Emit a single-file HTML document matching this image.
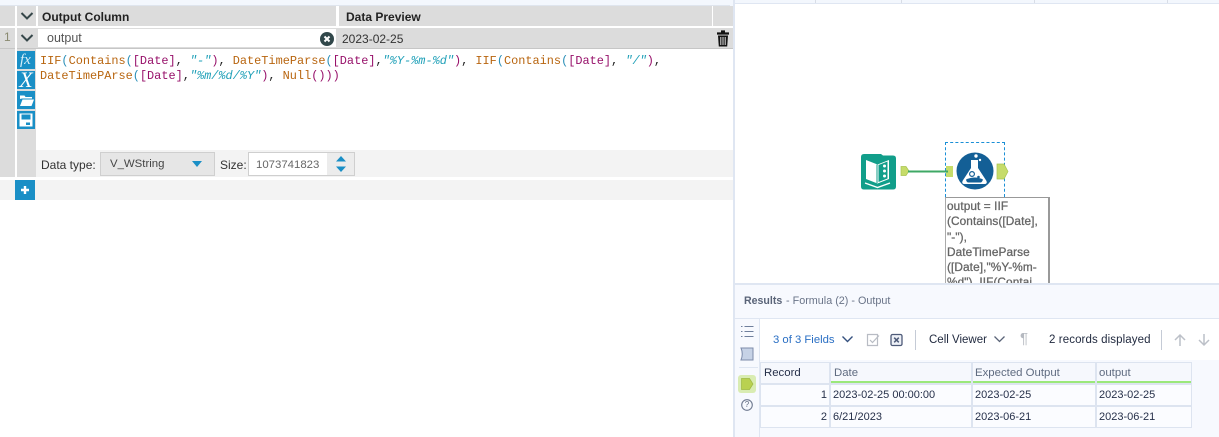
<!DOCTYPE html>
<html><head><meta charset="utf-8">
<style>
html,body{margin:0;padding:0;background:#fff}
body{width:1219px;height:437px;position:relative;overflow:hidden;font-family:"Liberation Sans",sans-serif;font-size:12px;color:#333}
.a{position:absolute}
.t{position:absolute;white-space:nowrap;line-height:16px}
.code{position:absolute;font-family:"Liberation Mono",monospace;font-size:11.9px;line-height:15px;white-space:pre;color:#222}
.f{color:#b8650f}.p{color:#2a8fb8}.c{color:#97106a}.s{color:#1fa0b8;font-style:italic}
.cell{position:absolute;background:#fbfcff;box-sizing:border-box;border:1px solid #dde4f0}
.cell span{position:absolute;top:2px;white-space:nowrap;line-height:16px;color:#26304a;font-size:11px}
.cell.h span{font-size:11.4px}
.btn{position:absolute;left:17px;width:18px;height:18px;background:#1a8fc6}
</style></head><body>

<!-- left pane -->
<div class="a" style="left:0;top:0;width:733px;height:5px;background:#f3f7fd"></div>
<div class="a" style="left:0;top:5px;width:733px;height:1px;background:#dfe5ee"></div>
<div class="a" style="left:0;top:6px;width:733px;height:20px;background:#dcdcdc"></div>
<div class="a" style="left:36px;top:6px;width:2px;height:20px;background:#fff"></div>
<div class="a" style="left:336px;top:6px;width:3px;height:20px;background:#fff"></div>
<div class="a" style="left:712px;top:6px;width:1px;height:42px;background:#fff"></div>
<svg class="a" style="left:20px;top:11px" width="14" height="10"><path d="M1.500 2 7 7.500 12.500 2" fill="none" stroke="#36474a" stroke-width="2"/></svg>
<div class="t" style="left:42px;top:9px;font-weight:bold;color:#222;font-size:12px">Output Column</div>
<div class="t" style="left:346px;top:9px;font-weight:bold;color:#222;font-size:12px">Data Preview</div>

<div class="a" style="left:0;top:28px;width:733px;height:20px;background:#dcdcdc"></div>
<div class="a" style="left:0;top:48px;width:733px;height:1px;background:#c6c6c6"></div>
<div class="t" style="left:4px;top:29px;color:#8a8a70">1</div>
<svg class="a" style="left:20px;top:33px" width="14" height="10"><path d="M1.500 2 7 7.500 12.500 2" fill="none" stroke="#36474a" stroke-width="2"/></svg>
<div class="a" style="left:38px;top:29px;width:298px;height:18px;background:#fff"></div>
<div class="t" style="left:47px;top:30px;color:#555;font-size:12.500px">output</div>
<svg class="a" style="left:320px;top:32px" width="14" height="14"><circle cx="7" cy="7" r="7" fill="#31474a"/><path d="M4.500 4.500 9.500 9.500M9.500 4.500 4.500 9.500" stroke="#fff" stroke-width="2"/></svg>
<div class="t" style="left:342px;top:31px;color:#333">2023-02-25</div>
<svg class="a" style="left:716px;top:30px" width="14" height="17" viewBox="0 0 14 17"><path d="M5 1.500h4M1 3.500h12" stroke="#111" stroke-width="2.200"/><path d="M2 5.500h10l-.8 11H2.800z" fill="#111"/><path d="M4.800 7v8M7 7v8M9.200 7v8" stroke="#ddd" stroke-width="1"/></svg>

<div class="a" style="left:0;top:49px;width:15px;height:128px;background:#dcdcdc"></div>
<div class="a" style="left:17px;top:49px;width:19px;height:128px;background:#dcdcdc"></div>
<div class="a" style="left:15px;top:6px;width:2px;height:171px;background:#fff"></div>

<div class="btn" style="top:51px"></div>
<div class="t" style="left:20px;top:52px;color:#d8eef8;font-family:'Liberation Serif',serif;font-style:italic;font-size:15px">fx</div>
<div class="btn" style="top:71px"></div>
<div class="t" style="left:17px;top:70px;width:18px;text-align:center;color:#fff;font-family:'Liberation Serif',serif;font-style:italic;font-size:22px;line-height:20px">X</div>
<div class="btn" style="top:91px"></div>
<svg class="a" style="left:17px;top:91px" width="18" height="18"><path d="M3 8V4.500h4.500l1 1.500h6.500v1.500H5z" fill="#fff"/><path d="M5.500 8.500H17L14.500 15H3z" fill="#fff"/></svg>
<div class="btn" style="top:111px"></div>
<svg class="a" style="left:17px;top:111px" width="18" height="18"><path d="M2.500 2.500h13v13h-13z" fill="#fff"/><path d="M4.500 3.500h9v5h-9z" fill="#1a8fc6"/><path d="M9 11.500h4v2.500H9z" fill="#1a8fc6"/></svg>

<div class="code" style="left:40px;top:54px"><span class="f">IIF</span><span class="p">(</span><span class="f">Contains</span><span class="p">(</span><span class="c">[Date]</span>, <span class="s">"-"</span><span class="c">)</span>, <span class="f">DateTimeParse</span><span class="p">(</span><span class="c">[Date]</span>,<span class="s">"%Y-%m-%d"</span><span class="c">)</span>, <span class="f">IIF</span><span class="p">(</span><span class="f">Contains</span><span class="p">(</span><span class="c">[Date]</span>, <span class="s">"/"</span><span class="c">)</span>,
<span class="f">DateTimePArse</span><span class="p">(</span><span class="c">[Date]</span>,<span class="s">"%m/%d/%Y"</span><span class="c">)</span>, <span class="f">Null</span><span class="c">()))</span></div>

<div class="a" style="left:36px;top:150px;width:697px;height:27px;background:#f3f3f3"></div>
<div class="t" style="left:41px;top:157px;color:#333;font-size:12px">Data type:</div>
<div class="a" style="left:100px;top:152px;width:115px;height:24px;box-sizing:border-box;background:#e6e6e6;border:1px solid #cfcfcf"></div>
<div class="t" style="left:110px;top:156px;color:#444;font-size:11.400px">V_WString</div>
<svg class="a" style="left:190px;top:160px" width="14" height="8"><path d="M2 1h10L7 7z" fill="#1a8fc6"/></svg>
<div class="t" style="left:220px;top:157px;color:#333">Size:</div>
<div class="a" style="left:248px;top:152px;width:107px;height:24px;box-sizing:border-box;background:#fff;border:1px solid #cfcfcf"></div>
<div class="a" style="left:327px;top:153px;width:27px;height:22px;background:#ececec"></div>
<div class="t" style="left:256px;top:157px;color:#666;font-size:11.400px">1073741823</div>
<svg class="a" style="left:334px;top:155px" width="14" height="18"><path d="M2 6.500 7 1l5 5.500z M2 11.500 7 17l5-5.500z" fill="#1a8fc6"/></svg>

<div class="a" style="left:0;top:180px;width:733px;height:20px;background:#f3f3f3"></div>
<div class="a" style="left:15px;top:180px;width:20px;height:20px;background:#1a8fc6"></div>
<svg class="a" style="left:15px;top:180px" width="20" height="20"><path d="M10 6v8M6 10h8" stroke="#fff" stroke-width="2.400"/></svg>

<!-- divider -->
<div class="a" style="left:730px;top:0;width:3px;height:6px;background:#f3f7fd"></div>
<div class="a" style="left:733px;top:0;width:2px;height:437px;background:#dfe6f2"></div>

<!-- canvas top ruler -->
<div class="a" style="left:735px;top:0;width:484px;height:3px;background:#f3f7fd"></div>
<div class="a" style="left:735px;top:3px;width:484px;height:1px;background:#dfe6f2"></div>
<div class="a" style="left:815px;top:0;width:1px;height:3px;background:#d8dde6"></div>
<div class="a" style="left:901px;top:0;width:1px;height:3px;background:#d8dde6"></div>
<div class="a" style="left:1034px;top:0;width:1px;height:3px;background:#d8dde6"></div>
<div class="a" style="left:1167px;top:0;width:1px;height:3px;background:#d8dde6"></div>

<!-- workflow -->
<div class="a" style="left:945px;top:142px;width:60px;height:55px;box-sizing:border-box;border:1px dashed #1a8fd6;border-bottom:none"></div>
<svg class="a" style="left:855px;top:150px" width="160" height="50" viewBox="855 150 160 50">
  <path d="M861 157q0-3 3-3h17l2 1.500h10q3 0 3 3v28q0 3-3 3h-29q-3 0-3-3z" fill="#119e8a"/>
  <path d="M866 160l11.500 4.500L889 160v19l-11.500 4.500L866 179z" fill="#fff"/>
  <path d="M877 164.500V183" stroke="#119e8a" stroke-width="1"/>
  <path d="M878.500 165l9-3.500v17l-9 3.500z" fill="#119e8a"/>
  <circle cx="884.500" cy="166" r="1.500" fill="#fff"/><circle cx="884.500" cy="171" r="1.500" fill="#fff"/><circle cx="884.500" cy="176" r="1.500" fill="#fff"/>
  <path d="M865 183l12.500 4.500L890 183" fill="none" stroke="#fff" stroke-width="1.400"/>
  <path d="M901 166.500h5l3 4.500-3 4.500h-5z" fill="#c6dc6a" stroke="#a9c452" stroke-width=".7"/>
  <rect x="946" y="166" width="7" height="11" fill="#c6dc6a"/>
  <path d="M908 171.500H948" stroke="#3fa865" stroke-width="2"/>
  <circle cx="975" cy="171" r="18.500" fill="#135f96"/>
  <path d="M971 160h7v8l8.500 13q1 3-2 3h-20q-3 0-2-3l8.500-13z" fill="#fff"/>
  <circle cx="972" cy="174" r="2.400" fill="#fff" stroke="#135f96" stroke-width="1.200"/>
  <circle cx="978.500" cy="177" r="1.300" fill="#135f96"/>
  <path d="M966 179.500q9-4 17 0-1 3-2.500 3h-12q-2 0-2.500-3z" fill="#135f96"/>
  <circle cx="976" cy="156" r="1.700" fill="#fff"/><circle cx="980" cy="160" r="1.200" fill="#fff"/>
  <path d="M997 164h7l4 7.500-4 7.500h-7z" fill="#c6dc6a" stroke="#a9c452" stroke-width=".7"/>
</svg>
<div class="a" style="left:945px;top:197px;width:105px;height:86px;box-sizing:border-box;background:#fff;border:1px solid #999;border-bottom:none;border-left:1px solid #aaa;border-right:2px solid #999;overflow:hidden">
  <div style="position:absolute;left:1px;top:1px;width:103px;line-height:15.300px;font-size:11.800px;letter-spacing:.1px;color:#666;font-weight:400;white-space:pre;-webkit-text-stroke:.3px #666">output = IIF
(Contains([Date],
"-"),
DateTimeParse
([Date],"%Y-%m-
%d"), IIF(Contai</div>
</div>

<!-- results -->
<div class="a" style="left:735px;top:283px;width:484px;height:154px;background:#f7f9fe"></div>
<div class="a" style="left:735px;top:283px;width:484px;height:2px;background:#dfe6f2"></div>
<div class="t" style="left:744px;top:293px;font-size:10.600px;font-weight:bold;color:#5a6478">Results</div>
<div class="t" style="left:786px;top:293px;font-size:10.800px;color:#6a7488">- Formula (2) - Output</div>
<div class="a" style="left:735px;top:318px;width:484px;height:1px;background:#dfe6f2"></div>
<div class="a" style="left:759px;top:319px;width:1px;height:118px;background:#dfe6f2"></div>
<div class="a" style="left:760px;top:319px;width:459px;height:41px;background:#fff"></div>

<svg class="a" style="left:736px;top:322px" width="24" height="100" viewBox="0 0 24 100">
  <path d="M5 4.500h1.500M5 9.500h1.500M5 14.500h1.500M8.500 4.500h9M8.500 9.500h9M8.500 14.500h9" stroke="#6f7f9c" stroke-width="1"/>
  <path d="M5 26h12v12H5q2.500-6 0-12z" fill="#c6d2e6" stroke="#7d8cab"/>
  <path d="M3 45.500h19" stroke="#dfe6f2"/>
  <rect x="2" y="53" width="18" height="18" rx="3" fill="#d9ecb2"/>
  <path d="M5.500 56.500h8l3.500 5.500-3.500 5.500h-8z" fill="#b9d150" stroke="#9eb843" stroke-width=".7"/>
  <circle cx="11" cy="83" r="5.300" fill="none" stroke="#6f7a90" stroke-width="1.100"/>
</svg>
<div class="t" style="left:743px;top:397px;width:8px;text-align:center;font-size:8px;color:#5f6b80">?</div>

<div class="t" style="left:773px;top:332px;color:#2a6fc4;font-size:11.300px">3 of 3 Fields</div>
<svg class="a" style="left:841px;top:335px" width="13" height="9"><path d="M1.500 1.500 6.500 6.500 11.500 1.500" fill="none" stroke="#34507e" stroke-width="1.400"/></svg>
<svg class="a" style="left:866px;top:333px" width="14" height="14"><path d="M1.500 1.500h10v11h-10z" fill="none" stroke="#b8bcc4" stroke-width="1.200"/><path d="M4 7l2.500 2.500L13 2.500" fill="none" stroke="#b8bcc4" stroke-width="1.200"/></svg>
<svg class="a" style="left:890px;top:333px" width="13" height="14"><rect x="1" y="1.500" width="11" height="11" rx="1.500" fill="#eef1f7" stroke="#4d5a78" stroke-width="1.300"/><path d="M4.200 4.700 8.800 9.300M8.800 4.700 4.200 9.300" stroke="#4d5a78" stroke-width="1.500"/></svg>
<div class="a" style="left:915px;top:330px;width:1px;height:20px;background:#c5cbd6"></div>
<div class="t" style="left:929px;top:332px;color:#222b40;font-size:11.500px">Cell Viewer</div>
<svg class="a" style="left:993px;top:335px" width="13" height="9"><path d="M1.500 1.500 6.500 6.500 11.500 1.500" fill="none" stroke="#5a6478" stroke-width="1.300"/></svg>
<div class="t" style="left:1020px;top:331px;color:#b5b9c0;font-size:15px">¶</div>
<div class="t" style="left:1049px;top:332px;color:#222b40;font-size:11.500px;letter-spacing:.1px">2 records displayed</div>
<div class="a" style="left:1161px;top:330px;width:1px;height:20px;background:#c5cbd6"></div>
<svg class="a" style="left:1173px;top:333px" width="38" height="14"><path d="M7 13V2M2 7l5-5 5 5M31 1v11M26 7l5 5 5-5" fill="none" stroke="#bcc0c8" stroke-width="1.500"/></svg>

<div class="cell h" style="left:760px;top:362px;width:70px;height:22px;background:#f6f8fd"><span style="left:3px;color:#26304a">Record</span></div>
<div class="cell h" style="left:830px;top:362px;width:142px;height:22px;background:#f6f8fd"><span style="left:3px;color:#5f6b80">Date</span></div>
<div class="cell h" style="left:972px;top:362px;width:124px;height:22px;background:#f6f8fd"><span style="left:2px;color:#5f6b80">Expected Output</span></div>
<div class="cell h" style="left:1096px;top:362px;width:96px;height:22px;background:#f6f8fd"><span style="left:2px;color:#5f6b80">output</span></div>
<div class="a" style="left:831px;top:381px;width:140px;height:2px;background:#9be87a"></div>
<div class="a" style="left:973px;top:381px;width:122px;height:2px;background:#9be87a"></div>
<div class="a" style="left:1097px;top:381px;width:94px;height:2px;background:#9be87a"></div>

<div class="cell" style="left:760px;top:384px;width:70px;height:22px"><span style="right:2px">1</span></div>
<div class="cell" style="left:830px;top:384px;width:142px;height:22px"><span style="left:2px">2023-02-25 00:00:00</span></div>
<div class="cell" style="left:972px;top:384px;width:124px;height:22px"><span style="left:2px">2023-02-25</span></div>
<div class="cell" style="left:1096px;top:384px;width:96px;height:22px"><span style="left:2px">2023-02-25</span></div>
<div class="cell" style="left:760px;top:406px;width:70px;height:22px"><span style="right:2px">2</span></div>
<div class="cell" style="left:830px;top:406px;width:142px;height:22px"><span style="left:2px">6/21/2023</span></div>
<div class="cell" style="left:972px;top:406px;width:124px;height:22px"><span style="left:2px">2023-06-21</span></div>
<div class="cell" style="left:1096px;top:406px;width:96px;height:22px"><span style="left:2px">2023-06-21</span></div>

</body></html>
